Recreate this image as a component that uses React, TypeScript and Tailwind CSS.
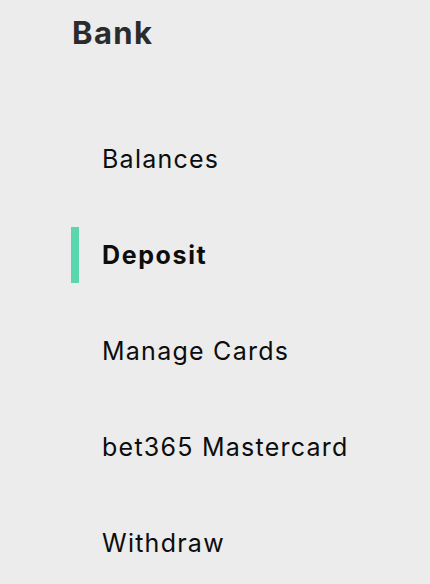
const items = ['Balances', 'Deposit', 'Manage Cards', 'bet365 Mastercard', 'Withdraw']

export default function App() {
    const active = 'Deposit'
    return (
        <div
            className="min-h-[584px] w-full bg-[#ebeceb] pl-[71px] pt-[13px]"
            style={{ fontFamily: 'Inter, "Noto Sans", sans-serif' }}
        >
            <h1 className="h-10 pl-px text-[31px] font-bold leading-10 tracking-[0.045em] text-[#2b2b2b]">
                Bank
            </h1>
            <ul className="mt-[78px] flex flex-col gap-10">
                {items.map((item) => (
                    <li key={item} className="flex h-14 items-center">
                        <span
                            className={
                                item === active
                                    ? 'h-14 w-2 bg-[#5bd7b0]'
                                    : 'h-14 w-2 bg-transparent'
                            }
                        ></span>
                        <span
                            className={
                                item === active
                                    ? 'ml-[23px] pt-[2px] text-[25px] font-bold tracking-[0.065em] text-[#0d0d0d]'
                                    : 'ml-[23px] pt-[2px] text-[25px] tracking-[0.05em] text-[#0d0d0d]'
                            }
                        >
                            {item}
                        </span>
                    </li>
                ))}
            </ul>
        </div>
    )
}
